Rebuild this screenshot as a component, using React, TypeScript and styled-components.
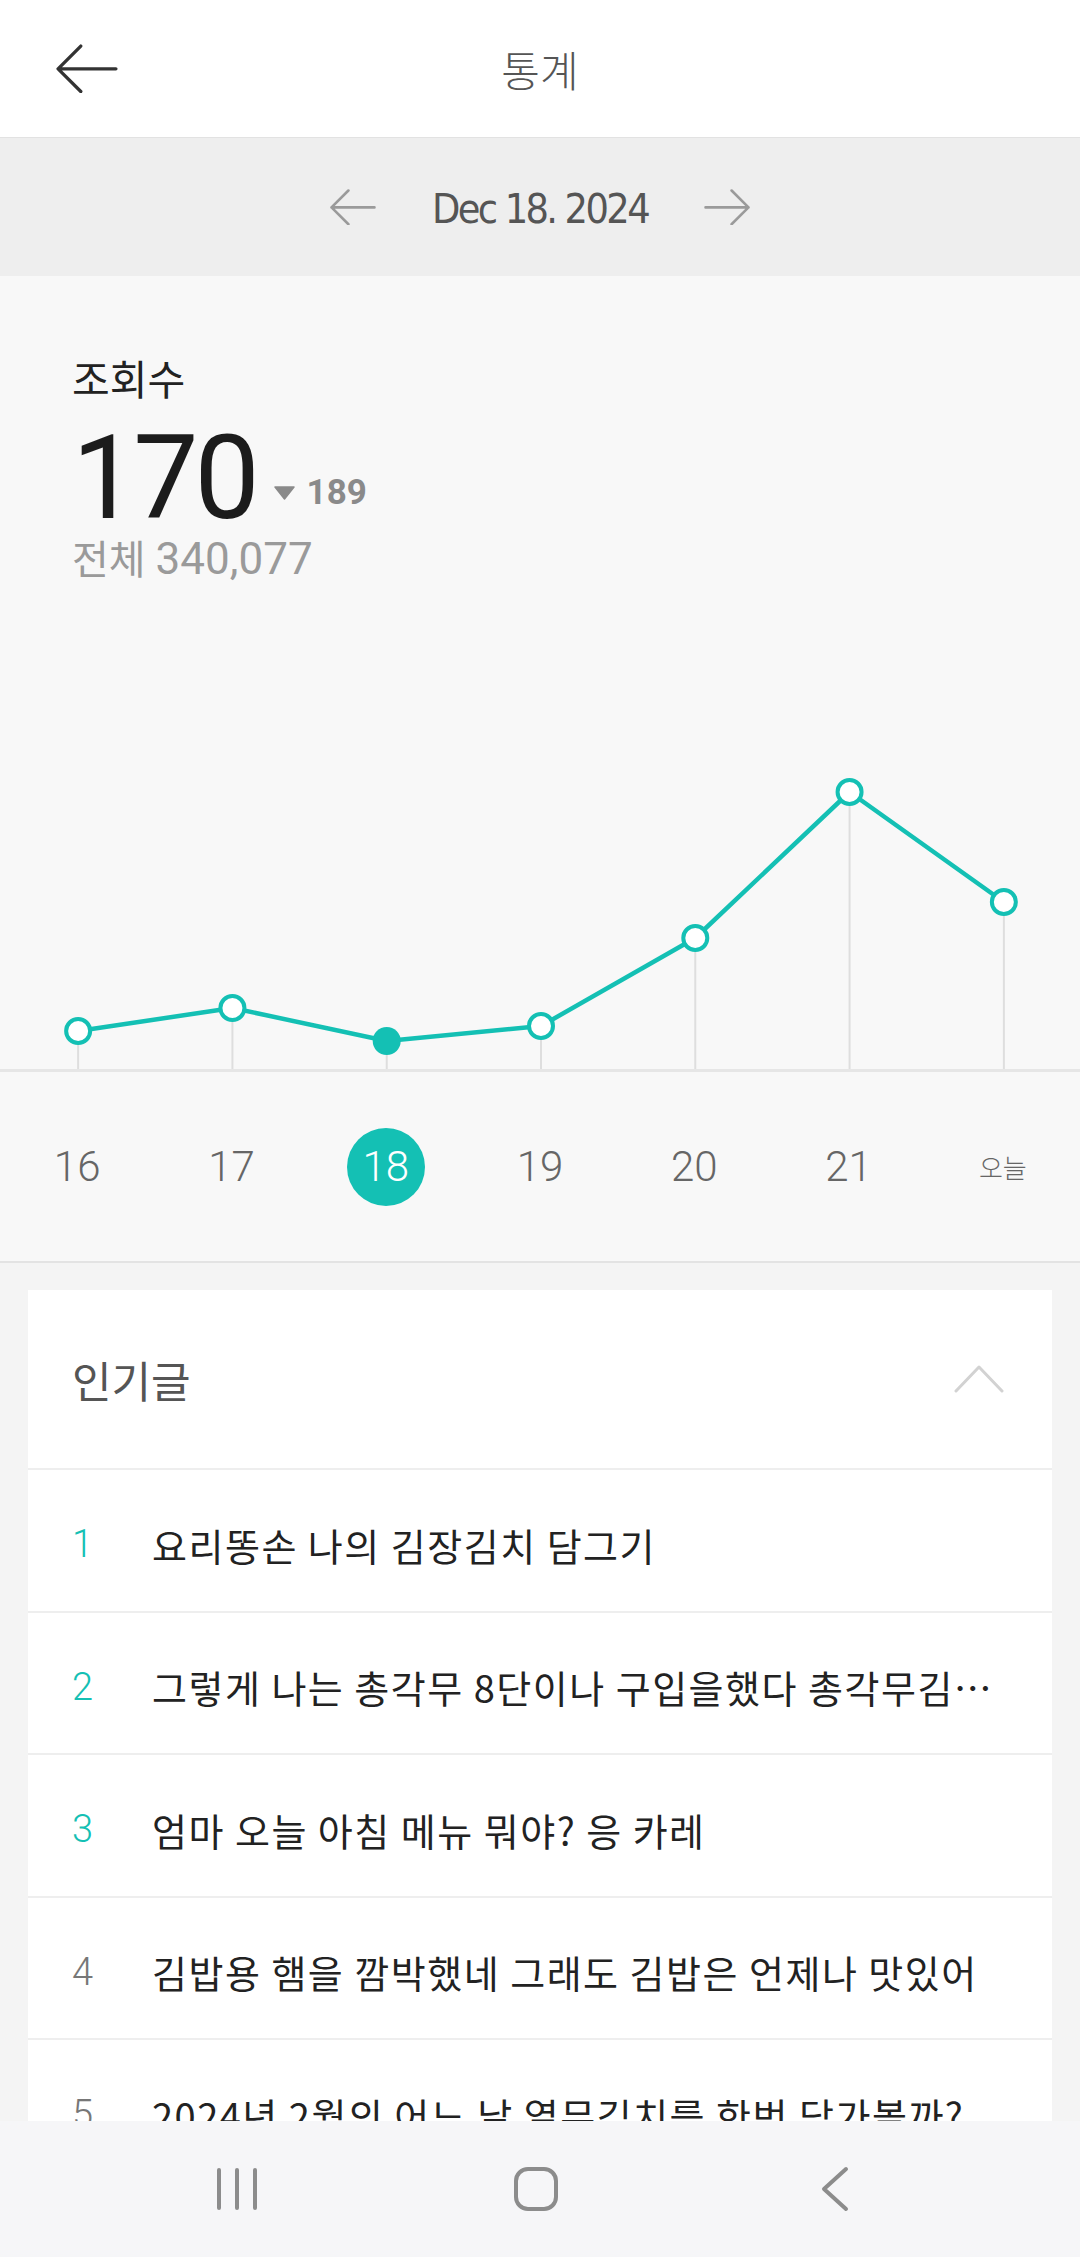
import styled, { createGlobalStyle } from 'styled-components';

const GlobalStyle = createGlobalStyle`
  html, body {
    margin: 0;
    padding: 0;
    background: #ffffff;
  }
  body {
    font-family: "Noto Sans CJK KR", "Noto Sans", sans-serif;
    -webkit-font-smoothing: antialiased;
  }
  * {
    box-sizing: border-box;
  }
`;

const TEAL = '#14c0b4';

const Screen = styled.div`
  width: 1080px;
  height: 2257px;
  display: flex;
  flex-direction: column;
  overflow: hidden;
`;

const TopBar = styled.header`
  height: 138px;
  flex: none;
  display: grid;
  grid-template-columns: 1fr auto 1fr;
  align-items: center;
  background: #ffffff;
  border-bottom: 1px solid #e2e2e2;
`;

const BackButton = styled.button`
  justify-self: start;
  margin-left: 56px;
  padding: 0;
  border: 0;
  background: none;
  display: flex;
`;

const Title = styled.h1`
  margin: 0;
  font-size: 42px;
  font-weight: 300;
  color: #555555;
  line-height: 1;
`;

const DateBar = styled.div`
  height: 138px;
  flex: none;
  display: flex;
  align-items: center;
  justify-content: center;
  gap: 56px;
  background: #eeeeee;
`;

const DateText = styled.span`
  font-family: "DejaVu Sans Condensed", "DejaVu Sans", sans-serif;
  font-stretch: condensed;
  font-size: 41px;
  letter-spacing: -2.6px;
  color: #555555;
  line-height: 1;
  padding-top: 4px;
`;

const StatsPanel = styled.section`
  flex: none;
  background: #f8f8f8;
  border-bottom: 2px solid #e3e3e3;
`;

const Summary = styled.div`
  padding: 76px 72px 0;
`;

const MetricLabel = styled.div`
  font-size: 41px;
  line-height: 50px;
  height: 50px;
  color: #222222;
`;

const BigRow = styled.div`
  display: flex;
  align-items: flex-end;
  margin-top: 19px;
`;

const BigNumber = styled.span`
  font-family: Roboto, "Noto Sans", sans-serif;
  font-size: 116px;
  line-height: 114px;
  height: 114px;
  letter-spacing: -4px;
  color: #1c1c1c;
`;

const Delta = styled.span`
  display: flex;
  align-items: center;
  gap: 12px;
  margin: 0 0 25px 18px;
  font-family: Roboto, "Noto Sans", sans-serif;
  font-size: 35px;
  font-weight: 700;
  line-height: 35px;
  color: #8a8a8a;
`;

const TotalLine = styled.div`
  font-family: Roboto, "Noto Sans CJK KR", sans-serif;
  font-size: 44px;
  line-height: 44px;
  color: #9a9a9a;
`;

const TotalLabel = styled.span`
  font-family: "Noto Sans CJK KR", sans-serif;
  font-size: 40px;
  margin-right: 10px;
`;

const ChartSvg = styled.svg`
  display: block;
  width: 1080px;
  height: 491px;
`;

const DayRow = styled.div`
  height: 189px;
  display: grid;
  grid-template-columns: repeat(7, 1fr);
  align-items: center;
  justify-items: center;
`;

const DayLabel = styled.span<{ $active?: boolean; $small?: boolean }>`
  width: 78px;
  height: 78px;
  border-radius: 50%;
  display: flex;
  align-items: center;
  justify-content: center;
  font-family: Roboto, "Noto Sans CJK KR", sans-serif;
  font-size: ${(p) => (p.$small ? '26px' : '42px')};
  font-weight: 300;
  color: ${(p) => (p.$active ? '#ffffff' : '#666666')};
  background: ${(p) => (p.$active ? TEAL : 'transparent')};
`;

const ListArea = styled.main`
  flex: 1;
  min-height: 0;
  overflow: hidden;
  background: #f4f4f4;
  padding: 27px 28px 0;
`;

const Card = styled.div`
  background: #ffffff;
`;

const CardHeader = styled.div`
  height: 180px;
  display: flex;
  align-items: center;
  justify-content: space-between;
  padding: 0 48px 0 44px;
  border-bottom: 2px solid #eeeeee;
`;

const CardTitle = styled.h2`
  margin: 0;
  font-size: 43px;
  font-weight: 400;
  color: #555555;
`;

const PostRow = styled.div`
  height: 142.5px;
  display: flex;
  align-items: center;
  padding: 8px 48px 0 44px;
  border-bottom: 2px solid #eeeeee;
`;

const Rank = styled.span<{ $top: boolean }>`
  width: 80px;
  flex: none;
  font-family: Roboto, sans-serif;
  font-size: 38px;
  font-weight: 300;
  color: ${(p) => (p.$top ? TEAL : '#777777')};
`;

const PostTitle = styled.span`
  flex: 1;
  min-width: 0;
  font-size: 38px;
  letter-spacing: 1.5px;
  color: #222222;
  white-space: nowrap;
  overflow: hidden;
  text-overflow: ellipsis;
`;

const NavBar = styled.nav`
  height: 136px;
  flex: none;
  display: flex;
  align-items: center;
  justify-content: center;
  gap: 199px;
  padding-right: 8px;
  background: #f6f6f8;
`;

const NavItem = styled.span`
  width: 100px;
  display: flex;
  justify-content: center;
`;

const days = [
  { label: '16', y: 450 },
  { label: '17', y: 427 },
  { label: '18', y: 460 },
  { label: '19', y: 445 },
  { label: '20', y: 357 },
  { label: '21', y: 211 },
  { label: '오늘', y: 321 },
];
const selected = 2;
const colX = (i: number) => ((i + 0.5) * 1080) / 7 + 1;
const BASE = 489;

const posts = [
  '요리똥손 나의 김장김치 담그기',
  '그렇게 나는 총각무 8단이나 구입을했다 총각무김치 담그기 대작전',
  '엄마 오늘 아침 메뉴 뭐야? 응 카레',
  '김밥용 햄을 깜박했네 그래도 김밥은 언제나 맛있어',
  '2024년 2월의 어느 날 열무김치를 한번 담가볼까?',
];

const Arrow = ({ dir, color, size, weight }: { dir: 'left' | 'right'; color: string; size: number; weight: number }) => (
  <svg width={size} height={size * 0.8} viewBox="0 0 60 48" fill="none">
    {dir === 'left' ? (
      <path d="M58 24H2M24 2L2 24l22 22" stroke={color} strokeWidth={weight} strokeLinecap="round" strokeLinejoin="round" />
    ) : (
      <path d="M2 24h56M36 2l22 22-22 22" stroke={color} strokeWidth={weight} strokeLinecap="round" strokeLinejoin="round" />
    )}
  </svg>
);

const Chart = () => {
  const pts = days.map((d, i) => `${colX(i)},${d.y}`).join(' ');
  return (
    <ChartSvg viewBox="0 0 1080 491">
      {days.map((d, i) => (
        <line key={`v${i}`} x1={colX(i)} y1={d.y} x2={colX(i)} y2={BASE} stroke="#dedede" strokeWidth={2} />
      ))}
      <rect x={0} y={BASE - 1} width={1080} height={3} fill="#e6e6e6" />
      <polyline points={pts} fill="none" stroke={TEAL} strokeWidth={4.5} strokeLinejoin="round" />
      {days.map((d, i) =>
        i === selected ? (
          <circle key={`c${i}`} cx={colX(i)} cy={d.y} r={14} fill={TEAL} />
        ) : (
          <circle key={`c${i}`} cx={colX(i)} cy={d.y} r={12} fill="#ffffff" stroke={TEAL} strokeWidth={4} />
        ),
      )}
    </ChartSvg>
  );
};

const App = () => {
  return (
    <Screen>
      <GlobalStyle />
      <TopBar>
        <BackButton aria-label="뒤로">
          <Arrow dir="left" color="#333333" size={62} weight={3.2} />
        </BackButton>
        <Title>통계</Title>
        <span />
      </TopBar>

      <DateBar>
        <Arrow dir="left" color="#9a9a9a" size={46} weight={3.4} />
        <DateText>Dec 18. 2024</DateText>
        <Arrow dir="right" color="#9a9a9a" size={46} weight={3.4} />
      </DateBar>

      <StatsPanel>
        <Summary>
          <MetricLabel>조회수</MetricLabel>
          <BigRow>
            <BigNumber>170</BigNumber>
            <Delta>
              <svg width="21" height="14" viewBox="0 0 21 14">
                <path d="M1 1h19L10.5 13z" fill="#8a8a8a" stroke="#8a8a8a" strokeWidth="1.5" strokeLinejoin="round" />
              </svg>
              189
            </Delta>
          </BigRow>
          <TotalLine>
            <TotalLabel>전체</TotalLabel>340,077
          </TotalLine>
        </Summary>
        <Chart />
        <DayRow>
          {days.map((d, i) => (
            <DayLabel key={d.label} $active={i === selected} $small={d.label === '오늘'}>
              {d.label}
            </DayLabel>
          ))}
        </DayRow>
      </StatsPanel>

      <ListArea>
        <Card>
          <CardHeader>
            <CardTitle>인기글</CardTitle>
            <svg width="50" height="28" viewBox="0 0 50 28" fill="none">
              <path d="M2 26L25 2l23 24" stroke="#d2d2d2" strokeWidth="3" strokeLinecap="round" strokeLinejoin="round" />
            </svg>
          </CardHeader>
          {posts.map((p, i) => (
            <PostRow key={i}>
              <Rank $top={i < 3}>{i + 1}</Rank>
              <PostTitle>{p}</PostTitle>
            </PostRow>
          ))}
        </Card>
      </ListArea>

      <NavBar>
        <NavItem>
          <svg width="44" height="44" viewBox="0 0 44 44" fill="none">
            <path d="M4 3v38M22 3v38M40 3v38" stroke="#8c8c8c" strokeWidth="4" strokeLinecap="round" />
          </svg>
        </NavItem>
        <NavItem>
          <svg width="46" height="46" viewBox="0 0 46 46" fill="none">
            <rect x="3" y="3" width="40" height="40" rx="12" stroke="#8c8c8c" strokeWidth="4" />
          </svg>
        </NavItem>
        <NavItem>
          <svg width="30" height="46" viewBox="0 0 30 46" fill="none">
            <path d="M26 3L4 23l22 20" stroke="#8c8c8c" strokeWidth="4" strokeLinecap="round" strokeLinejoin="round" />
          </svg>
        </NavItem>
      </NavBar>
    </Screen>
  );
};

export default App;
